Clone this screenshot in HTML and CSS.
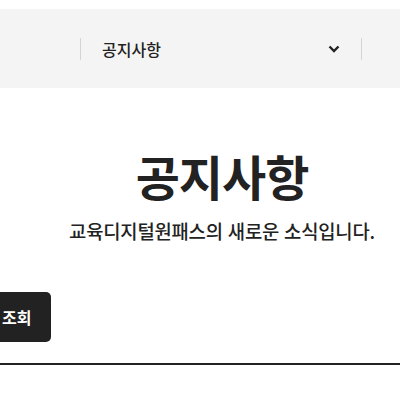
FILE: index.html
```html
<!DOCTYPE html>
<html lang="ko">
<head>
    <meta charset="UTF-8">
    <meta name="viewport" content="width=device-width, initial-scale=1.0">
    <title>공지사항</title>
    <link rel="stylesheet" href="styles.css">
</head>
<body>
    <div class="sub-nav">
        <div class="nav-select">
            <span class="nav-label">공지사항</span>
            <svg class="nav-arrow" width="12" height="8" viewBox="0 0 12 8">
                <path d="M1.5 1.5 L6 6 L10.5 1.5" fill="none" stroke="#222" stroke-width="2.4"/>
            </svg>
        </div>
    </div>

    <div class="page-head">
        <h1 class="page-title">공지사항</h1>
        <p class="page-desc">교육디지털원패스의 새로운 소식입니다.</p>
    </div>

    <div class="search-bar">
        <button class="search-btn" type="button">조회</button>
    </div>

    <div class="board-top"></div>
</body>
</html>
```

FILE: styles.css
```css
* {
    box-sizing: border-box;
}

body {
    margin: 0;
    font-family: 'Noto Sans CJK KR', 'Noto Sans', sans-serif;
    color: #222;
    background: #fff;
    overflow: hidden;
}

/* grey location bar */
.sub-nav {
    margin-top: 9px;
    height: 79px;
    background: #f4f4f4;
    display: flex;
    align-items: center;
    padding-left: 80px;
}

.nav-select {
    width: 282px;
    height: 22px;
    border-left: 1px solid #d4d4d4;
    border-right: 1px solid #d4d4d4;
    display: flex;
    align-items: center;
    justify-content: space-between;
    padding: 0 21px 0 21px;
}

.nav-label {
    font-size: 16px;
    font-weight: 500;
    line-height: 22px;
}

.nav-arrow {
    display: block;
}

/* title block */
.page-head {
    padding: 52px 0 0 44px;
    text-align: center;
}

.page-title {
    margin: 0;
    font-size: 48px;
    font-weight: 700;
    line-height: 70px;
    letter-spacing: -1px;
}

.page-desc {
    margin: 8px 0 0;
    font-size: 18.8px;
    font-weight: 500;
    line-height: 26px;
    letter-spacing: -0.2px;
}

/* search row */
.search-bar {
    margin-top: 48px;
    display: flex;
}

.search-btn {
    margin-left: -22px;
    width: 73px;
    height: 50px;
    border: none;
    border-radius: 5px;
    background: #222;
    color: #fff;
    font-family: inherit;
    font-size: 16px;
    font-weight: 700;
    padding: 0 0 0 24px;
    text-align: left;
}

.board-top {
    margin-top: 21px;
    border-top: 2px solid #222;
}
```
